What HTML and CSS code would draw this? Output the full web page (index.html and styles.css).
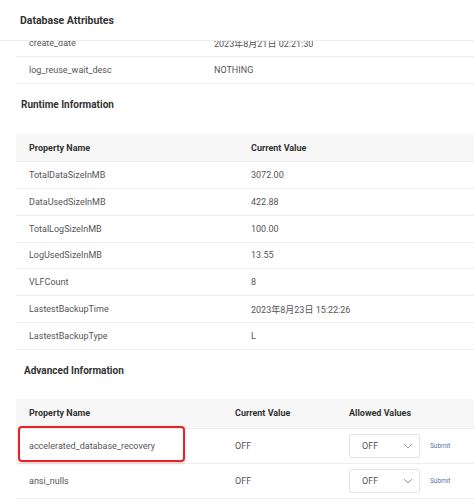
FILE: index.html
```html
<!DOCTYPE html>
<html lang="zh">
<head>
<meta charset="utf-8">
<title>Database</title>
<link rel="stylesheet" href="styles.css">
</head>
<body>
<div class="topbar"><h2 class="title">Database Attributes</h2></div>
<div class="content">
  <div class="tbl attrs">
    <div class="row"><div class="c1">create_date</div><div class="c2">2023年8月21日 02:21:30</div></div>
    <div class="row"><div class="c1">log_reuse_wait_desc</div><div class="c2">NOTHING</div></div>
  </div>

  <h3 class="sec runtime-title">Runtime Information</h3>
  <div class="tbl runtime">
    <div class="row head"><div class="c1">Property Name</div><div class="c2">Current Value</div></div>
    <div class="row"><div class="c1">TotalDataSizeInMB</div><div class="c2">3072.00</div></div>
    <div class="row"><div class="c1">DataUsedSizeInMB</div><div class="c2">422.88</div></div>
    <div class="row"><div class="c1">TotalLogSizeInMB</div><div class="c2">100.00</div></div>
    <div class="row"><div class="c1">LogUsedSizeInMB</div><div class="c2">13.55</div></div>
    <div class="row"><div class="c1">VLFCount</div><div class="c2">8</div></div>
    <div class="row"><div class="c1">LastestBackupTime</div><div class="c2">2023年8月23日 15:22:26</div></div>
    <div class="row"><div class="c1">LastestBackupType</div><div class="c2">L</div></div>
  </div>

  <h3 class="sec adv-title">Advanced Information</h3>
  <div class="tbl adv">
    <div class="row head"><div class="c1">Property Name</div><div class="c2">Current Value</div><div class="c3">Allowed Values</div></div>
    <div class="row">
      <div class="c1 marked">accelerated_database_recovery<span class="highlight"></span></div>
      <div class="c2">OFF</div>
      <div class="c3"><div class="select"><span>OFF</span><svg class="chev" viewBox="0 0 10 6" width="10" height="6"><path d="M1 1 L5 5 L9 1" fill="none" stroke="#999" stroke-width="1"/></svg></div><a class="submit">Submit</a></div>
    </div>
    <div class="row">
      <div class="c1">ansi_nulls</div>
      <div class="c2">OFF</div>
      <div class="c3"><div class="select"><span>OFF</span><svg class="chev" viewBox="0 0 10 6" width="10" height="6"><path d="M1 1 L5 5 L9 1" fill="none" stroke="#999" stroke-width="1"/></svg></div><a class="submit">Submit</a></div>
    </div>
  </div>
</div>
</body>
</html>
```
FILE: styles.css
```css
html, body {
  margin: 0;
  padding: 0;
  background: #fff;
  font-family: Roboto, "Noto Sans CJK SC", sans-serif;
  color: #555;
  overflow: hidden;
}
.topbar {
  position: relative;
  z-index: 1;
  height: 40px;
  background: #fff;
  border-bottom: 1px solid #eeeeee;
  display: flex;
  align-items: center;
  padding-left: 20px;
}
.title {
  margin: 0;
  font-size: 10.5px;
  font-weight: 700;
  color: #333;
}
.content {
  margin-top: -11px;
  padding-left: 16px;
}
.tbl { width: 100%; }
.row {
  display: flex;
  align-items: center;
  box-sizing: border-box;
  border-bottom: 1px solid #ededed;
  font-size: 9px;
  color: #555;
}
.c1 { padding-left: 13px; box-sizing: border-box; flex: none; position: relative; }
.c2, .c3 { flex: none; }
.attrs .row { height: 27px; }
.attrs .c1 { width: 198px; }
.sec {
  margin: 0;
  font-size: 10px;
  font-weight: 700;
  color: #333;
  line-height: 14px;
}
.runtime-title { padding: 14px 0 22px 5px; }
.runtime .row { height: 26.85px; }
.runtime .c1 { width: 235px; }
.head {
  background: #f7f7f8;
  font-weight: 700;
  color: #333;
  font-size: 9px;
}
.runtime .row.head { height: 28px; }
.adv-title { padding: 14px 0 21px 8px; }
.adv .row { height: 35px; }
.adv .row.head { height: 30px; }
.adv .c1 { width: 219px; }
.adv .c2 { width: 114px; }
.adv .c3 { display: flex; align-items: center; }
.select {
  width: 71px;
  height: 24px;
  box-sizing: border-box;
  border: 1px solid #e3e3e3;
  border-radius: 2px;
  display: flex;
  align-items: center;
  justify-content: space-between;
  padding: 0 6px 0 12px;
  color: #555;
  font-size: 9px;
}
.chev { display: block; }
.submit {
  margin-left: 10px;
  font-size: 6.5px;
  color: #5a74a8;
}
.highlight {
  position: absolute;
  left: 2px;
  top: -15px;
  width: 167px;
  height: 36px;
  box-sizing: border-box;
  border: 2px solid #e2232a;
  border-radius: 4px;
  box-shadow: 0 1px 3px rgba(200,0,0,0.25);
}
```
